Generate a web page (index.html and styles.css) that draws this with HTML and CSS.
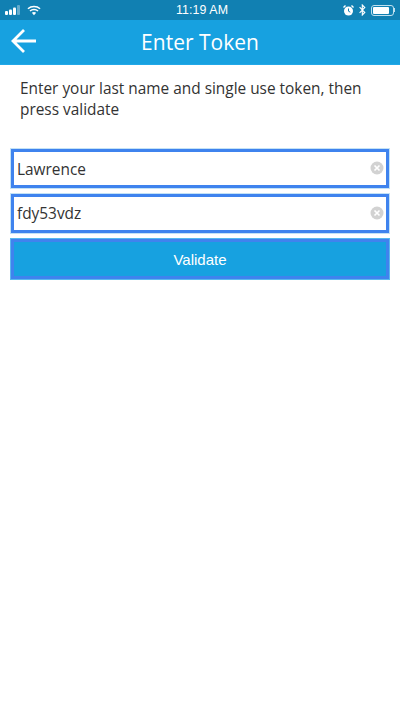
FILE: index.html
```html
<!DOCTYPE html>
<html lang="en">
<head>
<meta charset="utf-8">
<title>Enter Token</title>
<link rel="stylesheet" href="styles.css">
</head>
<body>
<div class="status">
  <div class="status-left">
    <svg class="signal" width="16" height="10" viewBox="0 0 16 10"><rect x="0" y="6" width="3" height="4" rx="1" fill="#fff"/><rect x="4" y="4.500" width="3" height="5.500" rx="1" fill="#fff"/><rect x="8" y="2.500" width="3" height="7.500" rx="1" fill="#fff"/><rect x="12" y="0" width="3" height="10" rx="1" fill="#fff" opacity=".35"/></svg>
    <svg class="wifi" width="14" height="11" viewBox="0 0 15 11"><path d="M1 3.600C4.600 .4 10.400 .4 14 3.600M3.200 6C5.600 3.900 9.400 3.900 11.800 6" fill="none" stroke="#fff" stroke-width="1.600"/><path d="M5.200 7.800C6.500 6.700 8.500 6.700 9.800 7.800L7.500 10.500Z" fill="#fff"/></svg>
  </div>
  <div class="clock">11:19 AM</div>
  <div class="status-right">
    <svg width="11" height="11" viewBox="0 0 11 11"><circle cx="5.500" cy="6" r="4.500" fill="#fff"/><path d="M5.500 3.500V6.200L7.300 7.200" fill="none" stroke="#1180b2" stroke-width="1"/><path d="M0.500 2.500L2.500 .5M10.500 2.500L8.500 .5" stroke="#fff" stroke-width="1.400"/></svg>
    <svg width="7" height="12" viewBox="0 0 7 12"><path d="M.6 3.200L5.800 8.500L3.300 11V1L5.800 3.500L.6 8.800" fill="none" stroke="#fff" stroke-width="1.100"/></svg>
    <span class="battery-wrap"><span class="battery"><span class="battery-fill"></span></span><span class="battery-nub"></span></span>
  </div>
</div>
<header class="nav">
  <svg class="back" width="28" height="26" viewBox="0 0 28 26"><path d="M26 13H3M14 2L3 13L14 24" fill="none" stroke="#fff" stroke-width="2.800"/></svg>
  <h1 class="title">Enter Token</h1>
</header>
<main class="content">
  <p class="intro">Enter your last name and single use token, then press validate</p>
  <div class="form">
    <div class="field field-first"><span class="value">Lawrence</span><span class="clear"><svg width="14" height="14" viewBox="0 0 14 14"><circle cx="7" cy="7" r="6.500" fill="#d2d2d2"/><path d="M4.500 4.500L9.500 9.500M9.500 4.500L4.500 9.500" stroke="#fff" stroke-width="1.700"/></svg></span></div>
    <div class="field"><span class="value">fdy53vdz</span><span class="clear"><svg width="14" height="14" viewBox="0 0 14 14"><circle cx="7" cy="7" r="6.500" fill="#d2d2d2"/><path d="M4.500 4.500L9.500 9.500M9.500 4.500L4.500 9.500" stroke="#fff" stroke-width="1.700"/></svg></span></div>
    <button class="validate">Validate</button>
  </div>
</main>
</body>
</html>
```
FILE: styles.css
```css
* { box-sizing: border-box; }
html, body { margin: 0; padding: 0; height: 100%; background: #fff; overflow: hidden; }
body { font-family: "Open Sans", sans-serif; color: #333; }
.status { height: 20px; background: #1180b2; display: grid; grid-template-columns: 1fr auto 1fr; align-items: center; padding: 0 5px 0 5px; color: #fff; }
.status-left { display: flex; align-items: center; gap: 6px; }
.clock { font-family: "Liberation Sans", sans-serif; font-size: 12.400px; font-weight: 400; letter-spacing: .1px; padding-left: 4px; }
.status-right { display: flex; align-items: center; justify-content: flex-end; gap: 5px; }
.battery-wrap { display: flex; align-items: center; }
.battery { width: 23px; height: 11px; border: 1px solid #bfe0ef; border-radius: 3px; padding: 1px; display: block; }
.battery-fill { display: block; width: 16px; height: 100%; background: #fff; border-radius: 1px; }
.battery-nub { display: block; width: 1px; height: 4px; background: #bfe0ef; }
.nav { height: 45px; background: #17a1e0; border-bottom: 1px solid #22a8e8; display: flex; align-items: center; justify-content: center; position: relative; }
.back { position: absolute; left: 10px; top: 8px; }
.title { margin: 0; font-size: 21px; font-weight: 400; color: #fff; line-height: 47px; }
.content { padding: 0 10px; }
.intro { margin: 0; padding: 13px 10px 0; font-size: 15.400px; line-height: 21px; color: #333; height: 83px; }
.form { display: flex; flex-direction: column; gap: 4px; }
.field { height: 41px; border: 4px solid #3f83ee; outline: 1px solid #c3e2f6; outline-offset: -1px; background: #fff; display: flex; align-items: center; justify-content: space-between; padding: 0 2px 0 3px; font-size: 15.400px; color: #333; }
.field-first .value { margin-top: 1px; }
.clear { display: flex; margin-bottom: 1px; }
.validate { height: 42px; background: #17a1e0; border: 4px solid #3f83ee; outline: 1px solid #57b8ee; outline-offset: -1px; color: #fff; font-family: "Liberation Sans", sans-serif; font-size: 15px; padding: 0; }
```
